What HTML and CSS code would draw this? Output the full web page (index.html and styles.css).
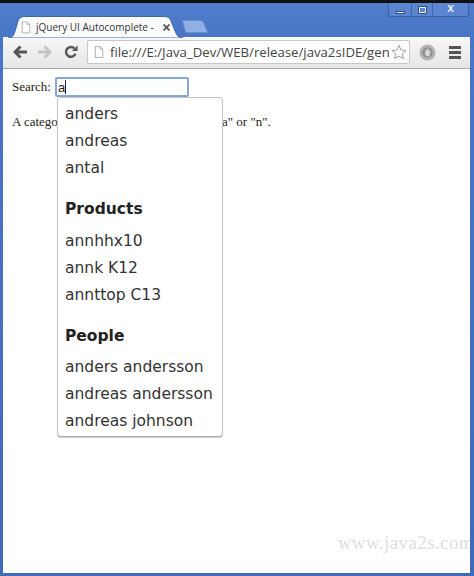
FILE: index.html
```html
<!DOCTYPE html>
<html lang="en">
<head>
<meta charset="utf-8">
<title>jQuery UI Autocomplete</title>
<link rel="stylesheet" href="styles.css">
</head>
<body>
<div class="window">
  <div class="caption">
    <div class="tab">
      <svg class="tab-shape" width="176" height="22" viewBox="0 0 176 22"><path d="M0 22 C5 22 6 19 8 12 L10 5 C11 2 13 0.500 17 0.500 L156 0.500 C160 0.500 162 2 163 5 L167 15 C169 20 171 22 175 22 Z" fill="#fbfbfb" stroke="#3f66a8" stroke-width="1"/></svg>
      <svg class="page-icon" width="10" height="13" viewBox="0 0 12 14"><path d="M1.500 .5H7.500L10.500 3.500V13.500H1.500ZM7.500 .5V3.500H10.500" fill="#fff" stroke="#a8a8a8"/></svg>
      <span class="tab-title">jQuery UI Autocomplete -</span>
      <svg class="tab-close" width="7" height="7" viewBox="0 0 7 7"><path d="M.5 .5L6.500 6.500M6.500 .5L.5 6.500" stroke="#555" stroke-width="1.700"/></svg>
    </div>
    <svg class="new-tab" width="27" height="13" viewBox="0 0 27 13"><path d="M.5 .5H18C20 .5 21 1.500 22 3.500L25.500 12.500H6C4 12.500 3.500 12 3 10Z" fill="#8fb0e6" stroke="#6c8fcc"/></svg>
    <div class="win-controls">
      <span class="win-btn min"><i class="min-bar"></i></span>
      <span class="win-btn max"><i class="max-box"></i></span>
      <span class="win-btn close">x</span>
    </div>
  </div>
  <div class="toolbar">
    <svg class="nav-icon" width="14" height="14" viewBox="0 0 14 14"><path d="M14 7H3M7.500 1.500L2 7L7.500 12.500" fill="none" stroke="#565656" stroke-width="3"/></svg>
    <svg class="nav-icon" width="14" height="14" viewBox="0 0 14 14"><path d="M0 7H11M6.500 1.500L12 7L6.500 12.500" fill="none" stroke="#c4c4c4" stroke-width="3"/></svg>
    <svg class="nav-icon reload" width="14" height="14" viewBox="0 0 15 15"><path d="M12.300 9.500A5.300 5.300 0 1 1 11.200 3.600" fill="none" stroke="#565656" stroke-width="2.600"/><path d="M8.500 6.500H14.500V.5Z" fill="#565656"/></svg>
    <div class="omnibox">
      <svg class="page-icon small" width="10" height="14" viewBox="0 0 12 14"><path d="M1.500 .5H7.500L10.500 3.500V13.500H1.500ZM7.500 .5V3.500H10.500" fill="#fff" stroke="#a0a0a0"/></svg>
      <span class="url">file:///E:/Java_Dev/WEB/release/java2sIDE/gen</span>
      <svg class="star" width="16" height="16" viewBox="0 0 17 16"><path d="M8.500 1L10.700 5.900L16 6.500L12 10L13.200 15L8.500 12.400L3.800 15L5 10L1 6.500L6.300 5.900Z" fill="#fff" stroke="#999"/></svg>
    </div>
    <svg class="ext" width="17" height="17" viewBox="0 0 18 18"><circle cx="9" cy="9" r="8.500" fill="#b4b4b4"/><circle cx="9" cy="9" r="5.500" fill="#8e8e8e"/><path d="M6.500 7.500V11L8 13H11L12 9V7H10V5H8V7H6.500Z" fill="#d6d6d6"/></svg>
    <div class="menu-btn"><i></i><i></i><i></i></div>
  </div>
  <main class="content">
    <div class="search-row">
      <label class="search-label">Search:</label>
      <div class="search-input"><span>a</span><i class="caret"></i></div>
    </div>
    <p class="hint">A categorized search result. Try typing "a" or "n".</p>
    <ul class="menu">
      <li class="item">anders</li>
      <li class="item">andreas</li>
      <li class="item">antal</li>
      <li class="category">Products</li>
      <li class="item">annhhx10</li>
      <li class="item">annk K12</li>
      <li class="item">annttop C13</li>
      <li class="category">People</li>
      <li class="item">anders andersson</li>
      <li class="item">andreas andersson</li>
      <li class="item">andreas johnson</li>
    </ul>
    <div class="watermark">www.java2s.com</div>
  </main>
</div>
</body>
</html>
```
FILE: styles.css
```css
* { box-sizing: border-box; }
html, body { margin: 0; padding: 0; }
body { width: 474px; height: 576px; overflow: hidden; background: #4a74c4; }

.window {
  position: relative;
  width: 474px;
  height: 576px;
  display: flex;
  flex-direction: column;
  padding: 0 4px 3px 3px;
  border-top: 3px solid #111;
  background: linear-gradient(#4f7ccb, #4a76c8 30px, #3f6ab8);
  overflow: hidden;
}

.caption {
  position: relative;
  height: 34px;
  flex: none;
  display: flex;
  align-items: flex-end;
  margin-left: 5px;
}
.tab {
  position: relative;
  width: 174px;
  height: 22px;
  display: flex;
  align-items: center;
  padding-left: 13px;
  flex: none;
  margin-bottom: -1px;
  z-index: 1;
}
.tab-shape { position: absolute; left: 0; top: 0; }
.page-icon { position: relative; flex: none; }
.tab-title {
  position: relative;
  margin-left: 5px;
  font: 10px "Open Sans", "Liberation Sans", sans-serif;
  color: #333;
  white-space: nowrap;
}
.tab-close {
  position: relative;
  flex: none;
  margin-left: 9px;
}
.new-tab { flex: none; margin: 0 0 4px 0; }

.win-controls {
  position: absolute;
  top: 0;
  right: 1px;
  width: 81px;
  height: 14px;
  display: flex;
  border: 1px solid #3a5f9f;
  border-top: 0;
  border-radius: 0 0 3px 3px;
  background: #5b85d0;
}
.win-btn {
  display: flex;
  align-items: center;
  justify-content: center;
  border-right: 1px solid #3f66ad;
  color: #e8effa;
}
.win-btn.min { width: 23px; }
.win-btn.max { width: 21px; }
.win-btn.close {
  flex: 1;
  border-right: 0;
  font: bold 12px "Liberation Sans", sans-serif;
  padding-bottom: 3px;
}
.min-bar { width: 9px; height: 3px; margin-top: 5px; background: #e6eefa; border: 1px solid #31507f; }
.max-box { width: 9px; height: 8px; border: 2px solid #e6eefa; outline: 1px solid #31507f; outline-offset: -1px; }

.toolbar {
  flex: none;
  height: 32px;
  display: flex;
  align-items: center;
  padding: 0 0 1px 10px;
  background: linear-gradient(#f7f7f7, #e6e6e6);
  border-bottom: 1px solid #a9a9a9;
}
.nav-icon { flex: none; margin-right: 11px; }
.nav-icon.reload { margin: 0 9px 0 1px; }
.omnibox {
  width: 323px;
  height: 24px;
  flex: none;
  display: flex;
  align-items: center;
  padding: 0 2px 0 6px;
  background: #fff;
  border: 1px solid #c8c8c8;
  border-radius: 2px;
}
.page-icon.small { margin-right: 6px; }
.url {
  flex: 1;
  overflow: hidden;
  white-space: nowrap;
  font: 13.2px "Open Sans", "Liberation Sans", sans-serif;
  color: #444;
}
.star { flex: none; margin-left: 2px; }
.ext { flex: none; margin-left: 9px; }
.menu-btn {
  margin-left: 13px;
  width: 12px;
  display: flex;
  flex-direction: column;
  gap: 2px;
}
.menu-btn i { height: 3px; background: #555; }

.content {
  position: relative;
  flex: 1;
  background: #fff;
  padding: 8px 9px 0;
  font: 13px "Liberation Serif", serif;
  color: #222;
  overflow: hidden;
}
.search-row { display: flex; align-items: center; height: 20px; }
.search-label { margin-right: 4px; }
.search-input {
  width: 134px;
  height: 20px;
  display: flex;
  align-items: center;
  padding-left: 1px;
  border: 2px solid #84a8d6;
  border-radius: 2px;
  font: 13px "Liberation Sans", sans-serif;
}
.caret { width: 1px; height: 14px; background: #222; }
.hint { margin: 17px 0 0; line-height: 16px; white-space: nowrap; }

.menu {
  position: absolute;
  left: 54px;
  top: 28px;
  width: 166px;
  height: 340px;
  margin: 0;
  padding: 3px 0 0;
  list-style: none;
  background: #fff;
  border: 1px solid #c5c5c5;
  border-bottom-color: #aaa;
  border-radius: 4px;
  box-shadow: 0 1px 1px #ccc;
  font-family: "DejaVu Sans", sans-serif;
  font-size: 15.5px;
  color: #333;
}
.item { height: 27px; line-height: 27px; padding-left: 7px; white-space: nowrap; }
.category {
  height: 45.5px;
  padding: 14px 0 0 7px;
  line-height: 27px;
  font-weight: bold;
  color: #222;
}
.watermark {
  position: absolute;
  right: -4px;
  bottom: 19px;
  font: 19px "Liberation Serif", serif;
  color: #dedede;
  letter-spacing: .4px;
  white-space: nowrap;
}
```
